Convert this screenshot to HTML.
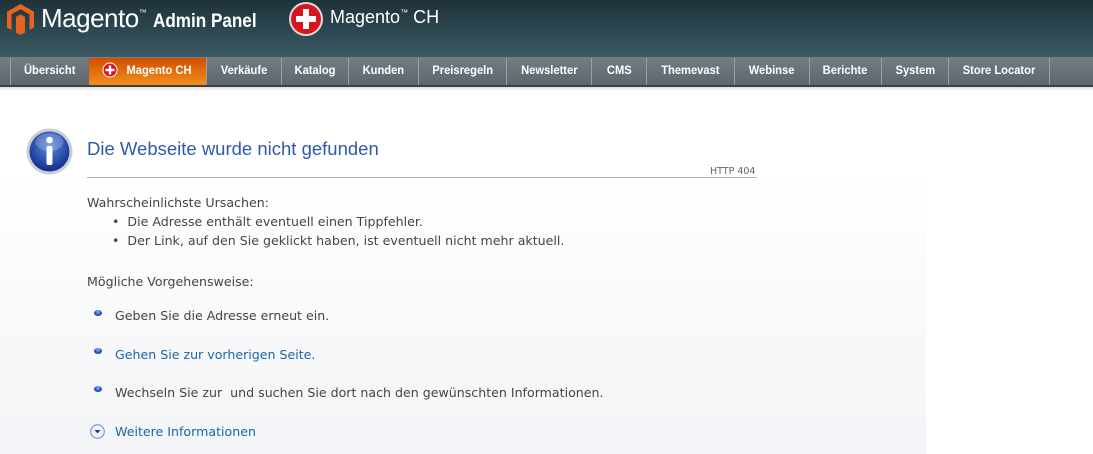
<!DOCTYPE html>
<html><head><meta charset="utf-8"><style>
body{margin:0;width:1093px;height:454px;overflow:hidden;background:#fff;font-family:"Liberation Sans",sans-serif;position:relative}
.hdr{position:absolute;left:0;top:0;width:1093px;height:57px;background:linear-gradient(#1f3239,#2f4a53 60%,#3c5963);border-bottom:1px solid #6a848c}
.nav{position:absolute;left:0;top:58px;width:1093px;height:27px;background:linear-gradient(#737b82,#5f676e);border-bottom:2px solid #3a4248}
.nav div{position:absolute;top:0;height:27px;line-height:25px;color:#fff;font-size:12px;font-weight:bold;text-align:center;border-right:1px solid #9aa1a6}
.nav span{display:inline-block;transform:scaleX(.93)}
.shadow{position:absolute;left:0;top:87px;width:1093px;height:4px;background:linear-gradient(#ddd,#fff)}
.box{position:absolute;left:0;top:168px;width:926px;height:286px;background:linear-gradient(#fff,#f3f4f7)}
.t{position:absolute;font-family:"DejaVu Sans","Liberation Sans",sans-serif;font-size:12.6px;color:#444;white-space:nowrap}
.dot{position:absolute;width:8px;height:6px;border-radius:50%;background:radial-gradient(circle at 50% 30%,#8ab4ff,#1b47c8 60%,#0d2a80)}
</style></head><body>
<div class="hdr">
<svg style="position:absolute;left:7px;top:4px" width="27" height="31" viewBox="0 0 27 31"><path d="M13.5 0L27 7.8V23.5L22.5 26V10.4L13.5 5.2 4.5 10.4V26L0 23.5V7.8Z M9 12.9L13.5 10.4 18 12.9V28.5L13.5 31 9 28.5Z" fill="#e8641e"/></svg>
<div style="position:absolute;left:41px;top:3px;color:#fff;font-size:26px;letter-spacing:-.5px">Magento<span style="font-size:8px;vertical-align:12px">™</span> <span style="font-size:19px;font-weight:bold;letter-spacing:0;display:inline-block;transform:scaleX(.9);transform-origin:left">Admin Panel</span></div>
<svg style="position:absolute;left:288px;top:1px" width="36" height="36"><circle cx="18" cy="18" r="17" fill="#ddd"/><circle cx="18" cy="18" r="15" fill="#d8141e"/><path d="M15 8h6v7h7v6h-7v7h-6v-7H8v-6h7z" fill="#fff"/></svg>
<div style="position:absolute;left:330px;top:7px;color:#fff;font-size:18px">Magento<span style="font-size:8px;vertical-align:8px">™</span> CH</div>
</div>
<div class="nav">
<div style="left:10px;width:78px;border-left:1px solid #9aa1a6"><span>Übersicht</span></div>
<div style="left:89px;width:117px;background:linear-gradient(#d24d00,#f0901e)"><svg style="vertical-align:-4px;margin-right:6px" width="16" height="16"><circle cx="8" cy="8" r="7.5" fill="#fff"/><circle cx="8" cy="8" r="6.5" fill="#d8141e"/><path d="M6.8 3.5h2.4v3.3h3.3v2.4H9.2v3.3H6.8V9.2H3.5V6.8h3.3z" fill="#fff"/></svg><span>Magento CH</span></div>
<div style="left:207px;width:74px"><span>Verkäufe</span></div>
<div style="left:282px;width:66px"><span>Katalog</span></div>
<div style="left:349px;width:69px"><span>Kunden</span></div>
<div style="left:419px;width:87px"><span>Preisregeln</span></div>
<div style="left:507px;width:84px"><span>Newsletter</span></div>
<div style="left:592px;width:54px"><span>CMS</span></div>
<div style="left:647px;width:87px"><span>Themevast</span></div>
<div style="left:735px;width:74px"><span>Webinse</span></div>
<div style="left:810px;width:71px"><span>Berichte</span></div>
<div style="left:882px;width:66px"><span>System</span></div>
<div style="left:949px;width:100px"><span>Store Locator</span></div>
</div>
<div class="shadow"></div>
<div class="box"></div>
<svg style="position:absolute;left:26px;top:128px" width="47" height="47"><defs><radialGradient id="g" cx="50%" cy="35%" r="60%"><stop offset="0" stop-color="#5d8ce0"/><stop offset="1" stop-color="#15328f"/></radialGradient></defs><circle cx="23.5" cy="23.5" r="23" fill="#c9ced6"/><circle cx="23.5" cy="23.5" r="20" fill="url(#g)"/><ellipse cx="23.5" cy="14" rx="14" ry="9" fill="#fff" opacity=".2"/><circle cx="23.5" cy="12" r="3.3" fill="#fff"/><rect x="20.5" y="18" width="6" height="19" rx="2" fill="#fff"/></svg>
<div class="t" style="left:87px;top:138px;font-family:'Liberation Sans',sans-serif;font-size:18.5px;color:#2f5aa8">Die Webseite wurde nicht gefunden</div>
<div style="position:absolute;left:87px;top:177px;width:670px;height:1px;background:#a7b2c4"></div>
<div class="t" style="left:710px;top:166px;font-size:9.5px;color:#666">HTTP 404</div>
<div class="t" style="left:87px;top:195px">Wahrscheinlichste Ursachen:</div>
<div class="t" style="left:112px;top:214px">•&nbsp; Die Adresse enthält eventuell einen Tippfehler.</div>
<div class="t" style="left:112px;top:233px">•&nbsp; Der Link, auf den Sie geklickt haben, ist eventuell nicht mehr aktuell.</div>
<div class="t" style="left:87px;top:274px">Mögliche Vorgehensweise:</div>
<div class="dot" style="left:94px;top:310px"></div>
<div class="t" style="left:115px;top:308px">Geben Sie die Adresse erneut ein.</div>
<div class="dot" style="left:94px;top:348px"></div>
<div class="t" style="left:115px;top:347px;color:#1a66a8">Gehen Sie zur vorherigen Seite.</div>
<div class="dot" style="left:94px;top:386px"></div>
<div class="t" style="left:115px;top:385px">Wechseln Sie zur &nbsp;und suchen Sie dort nach den gewünschten Informationen.</div>
<svg style="position:absolute;left:90px;top:424px" width="15" height="15"><circle cx="7.5" cy="7.5" r="6.8" fill="#eef2fa" stroke="#6b88b8"/><path d="M4.5 6h6l-3 3.5z" fill="#1b3a80"/></svg>
<div class="t" style="left:115px;top:424px;color:#1a66a8">Weitere Informationen</div>
</body></html>
